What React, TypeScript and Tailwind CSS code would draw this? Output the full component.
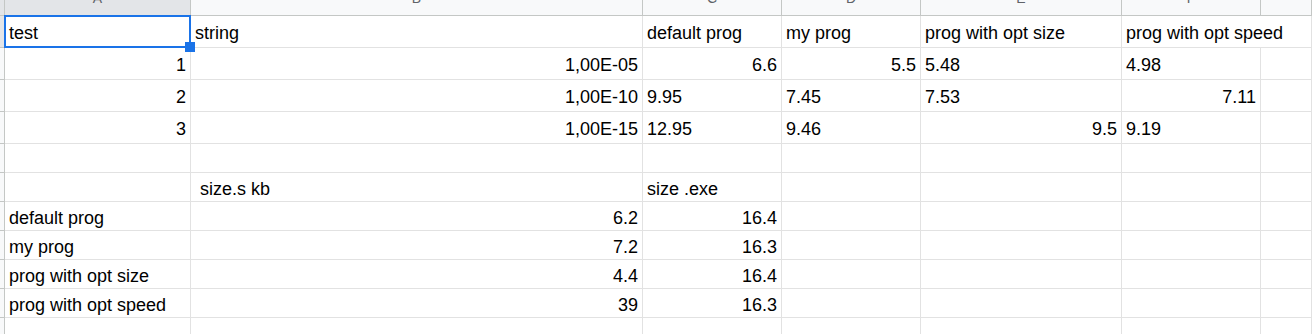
import React from 'react';

type Cell = { v: string; r?: boolean };

const COLS = ['A', 'B', 'C', 'D', 'E', 'F', 'G'];

const COL_W = ['w-[186px]', 'w-[452px]', 'w-[139px]', 'w-[139px]', 'w-[201px]', 'w-[139px]', 'flex-1'];

const ROWS: { h: string; cells: Cell[] }[] = [
  {
    h: 'h-[32px] pb-[4px]',
    cells: [
      { v: 'test' },
      { v: 'string' },
      { v: 'default prog' },
      { v: 'my prog' },
      { v: 'prog with opt size' },
      { v: 'prog with opt speed' },
      { v: '' },
    ],
  },
  {
    h: 'h-[32px] pb-[4px]',
    cells: [
      { v: '1', r: true },
      { v: '1,00E-05', r: true },
      { v: '6.6', r: true },
      { v: '5.5', r: true },
      { v: '5.48' },
      { v: '4.98' },
      { v: '' },
    ],
  },
  {
    h: 'h-[32px] pb-[4px]',
    cells: [
      { v: '2', r: true },
      { v: '1,00E-10', r: true },
      { v: '9.95' },
      { v: '7.45' },
      { v: '7.53' },
      { v: '7.11', r: true },
      { v: '' },
    ],
  },
  {
    h: 'h-[32px] pb-[4px]',
    cells: [
      { v: '3', r: true },
      { v: '1,00E-15', r: true },
      { v: '12.95' },
      { v: '9.46' },
      { v: '9.5', r: true },
      { v: '9.19' },
      { v: '' },
    ],
  },
  { h: 'h-[29px] pb-[2px]', cells: [] },
  {
    h: 'h-[29px] pb-[2px]',
    cells: [{ v: '' }, { v: ' size.s kb' }, { v: 'size .exe' }],
  },
  {
    h: 'h-[29px] pb-[2px]',
    cells: [{ v: 'default prog' }, { v: '6.2', r: true }, { v: '16.4', r: true }],
  },
  {
    h: 'h-[29px] pb-[2px]',
    cells: [{ v: 'my prog' }, { v: '7.2', r: true }, { v: '16.3', r: true }],
  },
  {
    h: 'h-[29px] pb-[2px]',
    cells: [{ v: 'prog with opt size' }, { v: '4.4', r: true }, { v: '16.4', r: true }],
  },
  {
    h: 'h-[29px] pb-[2px]',
    cells: [{ v: 'prog with opt speed' }, { v: '39', r: true }, { v: '16.3', r: true }],
  },
  { h: 'h-[29px] pb-[2px]', cells: [] },
];

export default function App() {
  return (
    <div
      className="h-[334px] w-[1312px] overflow-hidden bg-white text-[18px] text-black"
      style={{ fontFamily: '"Liberation Sans", Arial, sans-serif' }}
    >
      {/* column headers, mostly scrolled off the top */}
      <div className="flex h-[16px] border-b border-[#c4c7c5]">
        <div className="w-[5px] shrink-0 border-r border-[#c4c7c5] bg-[#e3e5e8]" />
        {COLS.map((c, i) => (
          <div
            key={c}
            className={`${COL_W[i]} flex shrink-0 items-end justify-center overflow-hidden border-r border-[#c4c7c5] ${
              i === 0 ? 'bg-[#e3e5e8]' : 'bg-[#f8f9fa]'
            }`}
          >
            {c !== 'G' && (
              <span className="mb-[10px] text-[14px] leading-none text-[#5f6368]">{c}</span>
            )}
          </div>
        ))}
      </div>

      {ROWS.map((row, ri) => (
        <div key={ri} className="flex">
          <div
            className={`w-[5px] shrink-0 border-b border-r border-[#c4c7c5] ${
              ri === 0 ? 'bg-[#e3e5e8]' : 'bg-[#f8f9fa]'
            } ${row.h}`}
          />
          {COLS.map((c, ci) => {
            const cell = row.cells[ci];
            const spill = ri === 0 && ci === 5;
            const active = ri === 0 && ci === 0;
            return (
              <div
                key={c}
                className={`${COL_W[ci]} ${row.h} relative flex shrink-0 items-end whitespace-pre border-b border-[#e2e2e2] px-[4px] leading-[20px] ${
                  spill ? 'overflow-visible' : 'border-r'
                } ${spill || active ? '' : 'overflow-hidden'} ${active ? 'z-10' : ''} ${
                  cell?.r ? 'justify-end' : 'justify-start'
                }`}
              >
                {cell?.v}
                {active && (
                  <>
                    <div className="pointer-events-none absolute -left-[1px] -top-[1px] bottom-[-1px] right-[-1px] border-2 border-[#1a73e8]" />
                    <div className="absolute -bottom-[5px] -right-[5px] h-[10px] w-[10px] bg-[#1a73e8]" />
                  </>
                )}
              </div>
            );
          })}
        </div>
      ))}
    </div>
  );
}
